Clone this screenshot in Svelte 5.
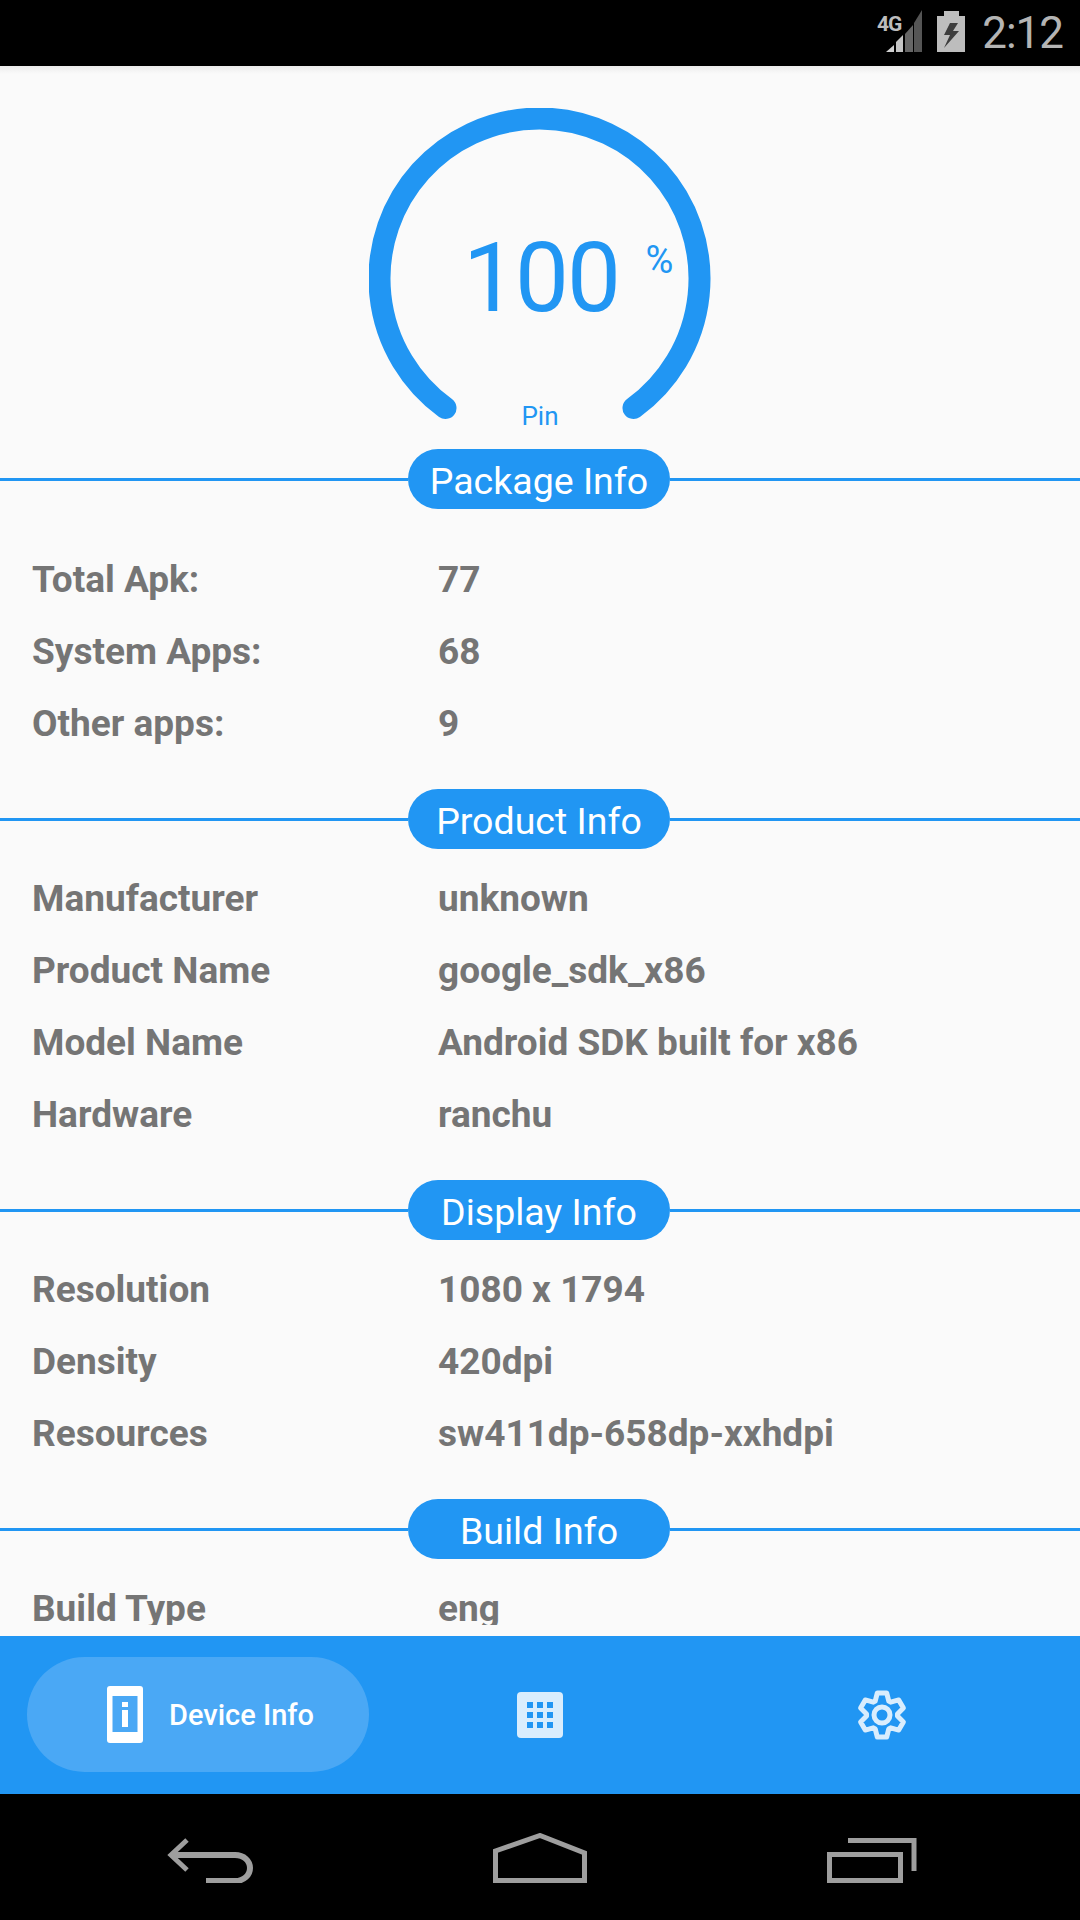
<script>
  const sections = [
    { title: 'Package Info', cls: 'first', rows: [['Total Apk:', '77'], ['System Apps:', '68'], ['Other apps:', '9']] },
    { title: 'Product Info', rows: [['Manufacturer', 'unknown'], ['Product Name', 'google_sdk_x86'], ['Model Name', 'Android SDK built for x86'], ['Hardware', 'ranchu']] },
    { title: 'Display Info', rows: [['Resolution', '1080 x 1794'], ['Density', '420dpi'], ['Resources', 'sw411dp-658dp-xxhdpi']] },
    { title: 'Build Info', rows: [['Build Type', 'eng']] }
  ];

  // six toothed gear outline around 0,0
  function gearPoints() {
    const pts = [];
    for (let i = 0; i < 6; i++) {
      const a = (i * 60 - 90) * Math.PI / 180;
      for (const [r, d] of [[15.5, -26], [22.5, -12], [22.5, 12], [15.5, 26]]) {
        const t = a + d * Math.PI / 180;
        pts.push((r * Math.cos(t)).toFixed(2) + ',' + (r * Math.sin(t)).toFixed(2));
      }
    }
    return pts.join(' ');
  }
</script>

<div class="screen">
  <div class="statusbar">
    <svg class="signal" width="45" height="44" viewBox="0 0 45 44">
      <text x="0" y="22" class="net">4G</text>
      <path d="M9 43 L17 43 L17 36 Z" fill="#d0d0d0" />
      <path d="M19 43 L26 43 L26 26 L19 33 Z" fill="#c4c4c4" />
      <path d="M28 43 L36 43 L36 16 L28 25 Z" fill="#666" />
      <path d="M37 43 L45 43 L45 1 L37 14 Z" fill="#555" />
    </svg>
    <svg class="battery" width="28" height="41" viewBox="0 0 28 41">
      <path d="M7 0 H22 V5 H28 V41 H0 V5 H7 Z" fill="#bdbdbd" />
      <path d="M13 12 L7 24 H13 L7 37 L22 20 H16 L21 12 Z" fill="#3d3d3d" />
    </svg>
    <span class="time">2:12</span>
  </div>
  <div class="shadow"></div>

  <main class="content">
    <div class="gauge">
      <svg width="342" height="330" viewBox="0 0 342 330">
        <path d="M76.5 300 A160 160 0 1 1 264.5 300" fill="none" stroke="#2196f3" stroke-width="22" stroke-linecap="round" />
        <text x="172" y="203" text-anchor="middle" class="value">100</text>
        <text x="290.5" y="165" text-anchor="middle" class="unit">%</text>
        <text x="171" y="317" text-anchor="middle" class="label">Pin</text>
      </svg>
    </div>

    {#each sections as s}
      <section class={s.cls}>
        <div class="head">
          <span class="line left"></span>
          <span class="pill">{s.title}</span>
          <span class="line"></span>
        </div>
        <div class="rows">
          {#each s.rows as r}
            <div class="row">
              <span class="key">{r[0]}</span>
              <span class="val">{r[1]}</span>
            </div>
          {/each}
        </div>
      </section>
    {/each}
  </main>

  <nav class="tabs">
    <div class="tab active">
      <svg width="36" height="57" viewBox="0 0 36 57">
        <rect width="36" height="57" rx="3" fill="#fff" />
        <rect x="5.5" y="10" width="25" height="36" fill="#4aa8f5" />
        <rect x="15" y="16" width="6" height="5" fill="#fff" />
        <rect x="15" y="24" width="6" height="17" fill="#fff" />
      </svg>
      <span>Device Info</span>
    </div>
    <div class="tab">
      <svg width="46" height="46" viewBox="0 0 46 46">
        <rect width="46" height="46" rx="4" fill="#d9edfd" />
        {#each [10, 20, 30] as y}
          {#each [10, 20, 30] as x}
            <rect {x} {y} width="6" height="6" fill="#2196f3" />
          {/each}
        {/each}
      </svg>
    </div>
    <div class="tab">
      <svg width="52" height="54" viewBox="-26 -27 52 54">
        <polygon points={gearPoints()} fill="none" stroke="#d9edfd" stroke-width="5" stroke-linejoin="round" />
        <circle r="8" fill="none" stroke="#d9edfd" stroke-width="5" />
      </svg>
    </div>
  </nav>

  <div class="softkeys">
    <svg width="86" height="45" viewBox="0 0 86 45">
      <path d="M20 2 L4 17 L20 32" fill="none" stroke="#9e9e9e" stroke-width="5" />
      <path d="M4 17 H68 C77 17 83 23 83 30 C83 37 77 43 68 43 H39" fill="none" stroke="#9e9e9e" stroke-width="6" />
    </svg>
    <svg width="94" height="50" viewBox="0 0 94 50">
      <path d="M2.5 47.5 V18 L47 2.5 L91.5 20 V47.5 Z" fill="none" stroke="#9e9e9e" stroke-width="5" />
    </svg>
    <svg width="90" height="45" viewBox="0 0 90 45">
      <rect x="2.5" y="16.5" width="71" height="26" fill="none" stroke="#9e9e9e" stroke-width="5" />
      <path d="M21 2.5 H87 V33" fill="none" stroke="#9e9e9e" stroke-width="5" />
    </svg>
  </div>
</div>

<style>
  :global(body) { margin: 0; background: #000; }

  .screen {
    width: 1080px;
    height: 1920px;
    display: flex;
    flex-direction: column;
    background: #fafafa;
    font-family: Roboto, "Liberation Sans", sans-serif;
    position: relative;
    overflow: hidden;
  }

  .statusbar {
    height: 66px;
    flex: none;
    background: #000;
    display: flex;
    align-items: center;
    justify-content: flex-end;
    padding-right: 17px;
    box-sizing: border-box;
  }
  .signal { margin-right: 15px; margin-bottom: 4px; }
  .net { font: 700 21px Roboto, sans-serif; letter-spacing: -1px; fill: #bdbdbd; }
  .battery { margin-right: 17px; margin-bottom: 3px; }
  .time { font-size: 44px; font-weight: 400; letter-spacing: -1px; color: #b4b4b4; line-height: 66px; }

  .shadow {
    position: absolute;
    top: 66px;
    left: 0;
    right: 0;
    height: 8px;
    background: linear-gradient(#ececec, #fafafa);
  }

  .content {
    flex: 1;
    min-height: 0;
    overflow: hidden;
    margin-bottom: 11px;
  }

  .gauge { display: flex; justify-content: center; padding-top: 42px; height: 383px; box-sizing: border-box; }
  .value { font-size: 96px; letter-spacing: -2px; fill: #2196f3; }
  .unit { font-size: 38px; fill: #2196f3; }
  .label { font-size: 26px; fill: #2196f3; }

  .head { display: flex; align-items: center; height: 60px; }
  .line { flex: 1; height: 3px; background: #2196f3; }
  .line.left { flex: none; width: 408px; }
  .pill {
    width: 262px;
    height: 60px;
    border-radius: 30px;
    background: #2196f3;
    color: #fff;
    font-size: 37.5px;
    line-height: 65px;
    text-align: center;
  }

  .rows { padding: 13px 0 30px; }
  section.first .rows { padding-top: 34px; }
  .row {
    display: flex;
    height: 72px;
    align-items: center;
    padding-left: 32px;
    font-size: 37px;
    font-weight: 700;
    color: #757575;
  }
  .key { width: 406px; }

  .tabs {
    height: 158px;
    flex: none;
    background: #2196f3;
    display: grid;
    grid-template-columns: repeat(3, 342px);
    padding: 21px 27px 22px;
    box-sizing: border-box;
  }
  .tab { display: flex; align-items: center; justify-content: center; color: #fff; font-size: 29px; font-weight: 500; }
  .tab.active { background: #4aa8f5; border-radius: 58px; justify-content: flex-start; gap: 26px; padding-left: 80px; }

  .softkeys {
    height: 126px;
    flex: none;
    background: #000;
    display: flex;
    justify-content: space-between;
    align-items: flex-end;
    padding: 0 163px 37px 167px;
    box-sizing: border-box;
  }
</style>
